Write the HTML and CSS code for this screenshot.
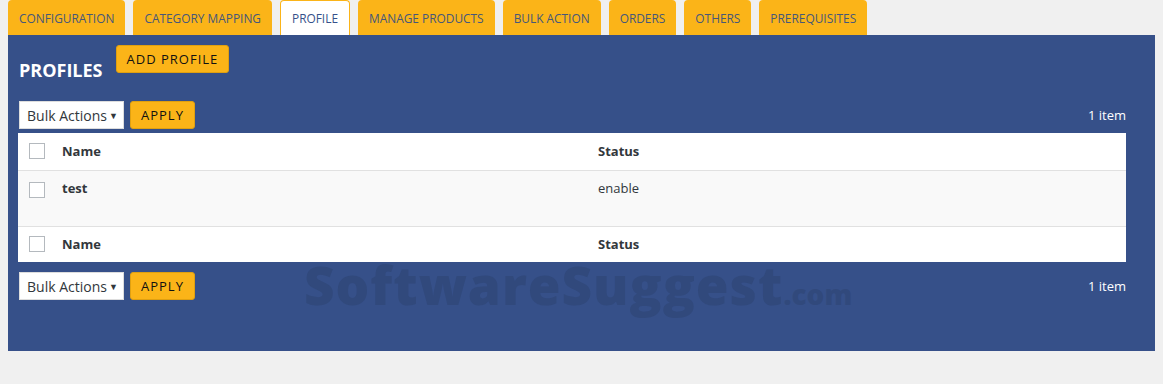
FILE: index.html
```html
<!DOCTYPE html>
<html lang="en">
<head>
    <meta charset="UTF-8">
    <title>Profiles</title>
    <link rel="stylesheet" href="styles.css">
</head>
<body>
    <div class="wrap">
        <ul class="tabs">
            <li class="tab">CONFIGURATION</li>
            <li class="tab">CATEGORY MAPPING</li>
            <li class="tab active">PROFILE</li>
            <li class="tab">MANAGE PRODUCTS</li>
            <li class="tab">BULK ACTION</li>
            <li class="tab">ORDERS</li>
            <li class="tab">OTHERS</li>
            <li class="tab">PREREQUISITES</li>
        </ul>

        <div class="panel">
            <div class="title-row">
                <h1>PROFILES</h1>
                <button class="btn add">ADD PROFILE</button>
            </div>

            <div class="tablenav">
                <div class="actions">
                    <div class="select">Bulk Actions <span class="caret">&#9660;</span></div>
                    <button class="btn">APPLY</button>
                </div>
                <span class="count">1 item</span>
            </div>

            <table class="list">
                <thead>
                    <tr>
                        <td class="check"><span class="box"></span></td>
                        <th class="name">Name</th>
                        <th>Status</th>
                    </tr>
                </thead>
                <tbody>
                    <tr class="item">
                        <td class="check"><span class="box"></span></td>
                        <td class="name"><strong>test</strong></td>
                        <td>enable</td>
                    </tr>
                </tbody>
                <tfoot>
                    <tr>
                        <td class="check"><span class="box"></span></td>
                        <th class="name">Name</th>
                        <th>Status</th>
                    </tr>
                </tfoot>
            </table>

            <div class="tablenav bottom">
                <div class="actions">
                    <div class="select">Bulk Actions <span class="caret">&#9660;</span></div>
                    <button class="btn">APPLY</button>
                </div>
                <span class="count">1 item</span>
            </div>

            <div class="watermark">SoftwareSuggest<span>.com</span></div>
        </div>
    </div>
</body>
</html>
```

FILE: styles.css
```css
body {
    margin: 0;
    background-color: #f0f0f0;
    font-family: "Open Sans", "Noto Sans", sans-serif;
    color: #32373c;
}
.wrap {
    padding: 0 8px;
}
.tabs {
    display: flex;
    gap: 8px;
    list-style: none;
    margin: 0;
    padding: 0;
}
.tab {
    height: 35px;
    box-sizing: border-box;
    padding: 0 11px;
    display: flex;
    align-items: center;
    background-color: #fbb418;
    border-radius: 4px 4px 0 0;
    font-size: 11.9px;
    color: #46577a;
}
.tab.active {
    background-color: #fff;
    border: 1px solid #fbb418;
    border-bottom: none;
    color: #36508a;
}
.panel {
    position: relative;
    background-color: #365089;
    padding: 10px 29px 52px 10px;
    height: 316px;
    box-sizing: border-box;
    overflow: hidden;
}
.title-row {
    display: flex;
    align-items: flex-start;
    gap: 13px;
}
h1 {
    margin: 13px 0 0 1px;
    font-size: 18px;
    font-weight: 700;
    color: #fff;
}
.btn {
    height: 28px;
    padding: 0 10px;
    background-color: #fbb418;
    border: 1px solid #e0a010;
    border-radius: 3px;
    font-family: inherit;
    font-size: 13px;
    letter-spacing: 1px;
    color: #111;
}
.tablenav {
    display: flex;
    justify-content: space-between;
    align-items: center;
    margin-top: 19px;
    height: 28px;
}
.tablenav.bottom {
    margin-top: 10px;
}
.actions {
    display: flex;
    gap: 6px;
    align-items: center;
    padding-left: 1px;
}
.select {
    width: 105px;
    height: 28px;
    box-sizing: border-box;
    background-color: #fff;
    border: 1px solid #ddd;
    padding: 0 5px 0 7px;
    display: flex;
    align-items: center;
    justify-content: space-between;
    font-size: 14px;
    color: #32373c;
}
.caret {
    font-size: 9px;
}
.count {
    font-size: 13px;
    color: #fff;
}
.list {
    width: 100%;
    margin-top: 4px;
    border-collapse: collapse;
    background-color: #fff;
    font-size: 13px;
    position: relative;
    z-index: 1;
}
.list th,
.list td {
    text-align: left;
    padding: 0;
    vertical-align: top;
}
.list thead tr {
    height: 37px;
    border-bottom: 1px solid #e1e1e1;
}
.list tfoot tr {
    height: 36px;
    border-top: 1px solid #e1e1e1;
}
.list thead th,
.list tfoot th {
    vertical-align: middle;
    font-weight: 700;
}
.list thead td.check,
.list tfoot td.check {
    vertical-align: middle;
}
.item {
    background-color: #f9f9f9;
    height: 56px;
}
.item td {
    padding-top: 8px;
}
.check {
    width: 44px;
}
.check .box {
    display: block;
    width: 14px;
    height: 14px;
    margin-left: 11px;
    border: 1px solid #b4b9be;
    background-color: #fff;
}
.item .check .box {
    margin-top: 3px;
}
.name {
    width: 536px;
}
.item strong {
    font-weight: 700;
}
.watermark {
    position: absolute;
    left: 296px;
    top: 229px;
    font-family: "Open Sans", sans-serif;
    font-weight: 800;
    font-size: 53px;
    line-height: 0.8;
    letter-spacing: 1px;
    color: rgba(40, 60, 100, 0.35);
}
.watermark span {
    font-size: 28px;
    line-height: 0.8;
    letter-spacing: 0;
}
```
